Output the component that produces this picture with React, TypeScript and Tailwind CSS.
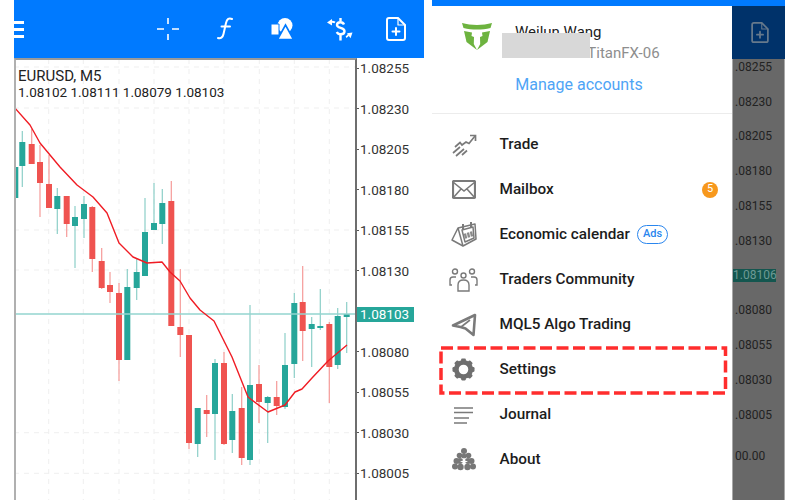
const T = "#26a69a";
const R = "#ef5350";
type C = [number, 0 | 1, number, number, number, number];
const candles: C[] = [
  [15.3, 0, 166, 167, 198, 198],
  [22.3, 0, 131, 142, 166, 187],
  [31.7, 1, 129, 144, 164, 164],
  [40, 1, 145, 162, 183, 217],
  [49, 1, 155, 184, 208, 208],
  [57.3, 0, 188, 196, 209, 234],
  [66.7, 1, 196, 196, 224, 237],
  [75, 0, 206, 217, 226, 268],
  [84, 0, 196, 204, 219, 238],
  [92.3, 1, 206, 207, 259, 272],
  [101.7, 1, 248, 261, 288, 289],
  [110, 1, 272, 285, 292, 303],
  [119, 1, 283, 293, 360, 381],
  [127.3, 0, 269, 287, 360, 360],
  [136.7, 0, 258, 272, 288, 300],
  [145, 0, 198, 232, 276, 276],
  [154, 0, 183, 223, 230, 230],
  [162.3, 0, 189, 203, 224, 244],
  [171.3, 1, 181, 201, 326, 326],
  [180.3, 1, 269, 327, 335, 357],
  [189, 1, 335, 335, 443, 449],
  [197.7, 0, 408, 408, 444, 457],
  [206.7, 1, 395, 410, 414, 437],
  [215, 0, 359, 363, 414, 460],
  [224, 1, 352, 363, 444, 445],
  [232.3, 0, 394, 411, 440, 453],
  [241.7, 1, 387, 408, 458, 465],
  [250, 0, 305, 385, 460, 465],
  [259, 1, 365, 384, 402, 423],
  [267.7, 0, 396, 397, 403, 443],
  [276.7, 1, 381, 397, 406, 415],
  [285, 0, 333, 365, 407, 409],
  [294.3, 0, 293, 303, 364, 378],
  [302.7, 1, 266, 302, 331, 361],
  [311.7, 0, 317, 324, 329, 367],
  [320.3, 0, 289, 326, 328, 330],
  [329.3, 1, 322, 324, 367, 403],
  [337.7, 0, 308, 316, 365, 369],
  [346.7, 0, 302, 314, 317, 353],
];
const ma =
  "14,107 30,125 40,143 60,167 77,185 93,197 107,213 119,243 133,257 147,263 162,262 170,272 180,281 190,298 200,310 214,321 232,357 248,397 268,412 285,405 295,392 302,389 312,378 328,361 347,345";
const leftPrices = ["1.08255", "1.08230", "1.08205", "1.08180", "1.08155", "1.08130", "1.08105", "1.08080", "1.08055", "1.08030", "1.08005"];
const rightPrices = [".08255", ".08230", ".08205", ".08180", ".08155", ".08130", "", ".08080", ".08055", ".08030", ".08005"];

function Chart() {
  return (
    <svg width={343} height={441} viewBox="14 59 343 441" className="block">
      {[48.7, 83.3, 119, 154, 189, 224, 259.3, 294.3, 329.3].map((x) => (
        <line key={x} x1={x} x2={x} y1={59} y2={500} stroke="#efefef" strokeDasharray="5 5" />
      ))}
      {[67, 108, 230, 270, 432.7, 473.3].map((y) => (
        <line key={y} x1={14} x2={357} y1={y} y2={y} stroke="#efefef" strokeDasharray="5 5" />
      ))}
      {candles.map(([x, c, wt, bt, bb, wb]) => (
        <g key={x}>
          <line x1={x} x2={x} y1={wt} y2={wb} stroke={c ? "#f59a98" : "#8ccfc8"} strokeWidth={1.2} />
          <rect x={x - 3} y={bt} width={6} height={bb - bt} fill={c ? R : T} />
        </g>
      ))}
      <line x1={14} x2={357} y1={314} y2={314} stroke="#93d5cf" strokeWidth={1.3} />
      <polyline points={ma} fill="none" stroke="#f01c24" strokeWidth={1.4} strokeLinejoin="round" />
    </svg>
  );
}

function FilePlus({ color, w, h }: { color: string; w: number; h: number }) {
  return (
    <svg width={w} height={h} viewBox="0 0 20 24" fill="none" stroke={color} strokeWidth={2} strokeLinejoin="round" strokeLinecap="round">
      <path d="M3 1h9l7 7v13a2 2 0 0 1-2 2H3a2 2 0 0 1-2-2V3a2 2 0 0 1 2-2z" />
      <path d="M12 1v7h7" strokeWidth={1.2} />
      <path d="M10 11v7M6.5 14.5h7" />
    </svg>
  );
}

function Toolbar() {
  return (
    <div className="relative h-[58px] bg-[#007aff] flex items-center">
      <div className="w-[10px] flex flex-col gap-[4px]">
        <div className="h-[3px] bg-white" />
        <div className="h-[3px] bg-white" />
        <div className="h-[3px] bg-white" />
      </div>
      <div className="ml-auto mr-[18px] flex items-center gap-[33px]">
        <svg width={24} height={24} viewBox="0 0 24 24" stroke="#fff" strokeWidth={1.6}>
          <path d="M12 1v6M12 17v6M1 12h7M16 12h7" />
        </svg>
        <svg width={24} height={26} viewBox="0 0 24 26" fill="none" stroke="#fff" strokeWidth={2} strokeLinecap="round">
          <path d="M19 3c-3-1.5-5 0-6 4l-2.5 11c-.7 3.5-3 5-5.500 4" />
          <path d="M8.500 10.500h8.500" />
        </svg>
        <svg width={24} height={22} viewBox="0 0 24 22" fill="#fff">
          <circle cx={15} cy={7.5} r={7.5} />
          <path d="M1 6h8v11H1z" stroke="#007aff" strokeWidth={1} />
          <path d="M15.500 7 23.500 21.500H7.500z" stroke="#007aff" strokeWidth={1.6} />
        </svg>
        <svg width={26} height={24} viewBox="0 0 26 24" fill="none" stroke="#fff" strokeWidth={2.4}>
          <path d="M17 7.500c-.6-1.600-1.900-2.300-3.500-2.300-2 0-3.500 1-3.500 2.800 0 3.700 7.500 2.200 7.500 6.200 0 2-1.700 3-3.800 3-1.800 0-3.200-.8-3.900-2.300" />
          <path d="M13.500 1v3M13.500 18v5.500" />
          <path d="M8 5.500C6.500 4.500 5 4.500 3 5" strokeWidth={2} />
          <path d="M0 5.500 5 2v6.500zM25.500 15.500l-5.500.8 3.500 5z" fill="#fff" stroke="none" />
          <path d="M19 20c1.200-.5 2-1.200 2.500-2.500" strokeWidth={2} />
        </svg>
        <FilePlus color="#fff" w={20} h={24} />
      </div>
    </div>
  );
}

function Left() {
  return (
    <div className="w-[410px] shrink-0 h-[500px] flex flex-col bg-white overflow-hidden">
      <Toolbar />
      <div className="flex flex-1 min-h-0 relative">
        <div className="relative w-[343px] shrink-0 h-[442px] border-t-2 border-t-[#9a9a9a] border-l-2 border-l-[#b0b0b0] border-r-2 border-r-[#6e6e6e] overflow-hidden">
          <div className="-ml-[2px] -mt-[1px]">
            <Chart />
          </div>
          <div className="absolute left-[2px] top-[8px] text-[#222] leading-[16px]">
            <div className="text-[15px]">EURUSD, M5</div>
            <div className="text-[13.5px]">1.08102 1.08111 1.08079 1.08103</div>
          </div>
        </div>
        <div className="flex flex-col -mt-[10px] text-[13.5px] text-[#333]">
          {leftPrices.map((p) => (
            <div key={p} className="h-[40.5px] flex items-center">
              <span className="w-[2px] h-px bg-[#555] mr-[1px]" />
              {p}
            </div>
          ))}
        </div>
        <div className="absolute left-[343px] top-[249px] w-[57px] h-[15px] bg-[#26a69a] text-white text-[13.5px] leading-[15px] pl-[3px]">
          1.08103
        </div>
      </div>
    </div>
  );
}

const iconProps = { fill: "none", stroke: "#7a7a7a", strokeWidth: 2 };

const rows: { label: string; icon: React.ReactNode; extra?: React.ReactNode }[] = [
  {
    label: "Trade",
    icon: (
      <svg width={26} height={24} viewBox="0 0 26 24" {...iconProps} strokeWidth={1.7}>
        <path d="M4 14 9 9.500l2 2.500 4-3 3 1.500L24 3" />
        <path d="M19 2.500h5.500V8" />
        <path d="M2 20l7-6M5 23l8-7M11 22l5-4.500" />
      </svg>
    ),
  },
  {
    label: "Mailbox",
    icon: (
      <svg width={24} height={20} viewBox="0 0 24 20" {...iconProps} strokeWidth={2.2}>
        <rect x={1} y={1} width={22} height={17} rx={1} />
        <path d="M1 2l11 9 11-9M1 18l8-9M23 18l-8-9" strokeWidth={1.6} />
      </svg>
    ),
  },
  {
    label: "Economic calendar",
    icon: (
      <svg width={26} height={28} viewBox="0 0 26 28" {...iconProps} strokeWidth={1.5} strokeLinejoin="round">
        <path d="M1 19 7 7l17-4 1 15-13 7z" />
        <path d="M7 7l5 18" />
        <path d="M11 9l11-3 1 11-9 4z" />
        <path d="M14 12.500l1 5M17 11.500l1 5M20 10.500l1 5" strokeWidth={2.4} stroke="#8a8a8a" />
        <path d="M12 3v5M20 1v5" strokeWidth={2} />
      </svg>
    ),
    extra: (
      <span className="ml-[7px] h-[19px] w-[31px] rounded-full border border-[#2a86ee] text-[#2a86ee] text-[11px] font-medium flex items-center justify-center">
        Ads
      </span>
    ),
  },
  {
    label: "Traders Community",
    icon: (
      <svg width={29} height={24} viewBox="0 0 29 24" {...iconProps} strokeWidth={1.4}>
        <circle cx={6} cy={3.5} r={2.5} />
        <circle cx={14.5} cy={7.5} r={2.5} />
        <circle cx={23} cy={3.5} r={2.5} />
        <path d="M3 17H1v-5c0-2 1-3 3-3h3M26 17h2v-5c0-2-1-3-3-3h-3" />
        <path d="M9 23v-6c0-3 2-5 5.500-5s5.500 2 5.500 5v6z" />
      </svg>
    ),
  },
  {
    label: "MQL5 Algo Trading",
    icon: (
      <svg width={26} height={24} viewBox="0 0 26 24" {...iconProps} strokeWidth={2.6} strokeLinejoin="round">
        <path d="M2 12.500 24 2l-1.500 20-8-6.500-5 -1.500z" />
        <path d="M19 7l-9 7" strokeWidth={1.6} />
      </svg>
    ),
  },
  {
    label: "Settings",
    icon: (
      <svg width={23} height={23} viewBox="0 0 24 24">
        <circle cx={12} cy={12} r={7.5} fill="none" stroke="#6f6f6f" strokeWidth={5} />
        {[0, 45, 90, 135, 180, 225, 270, 315].map((a) => (
          <rect key={a} x={9.5} y={0.5} width={5} height={5} rx={1.2} fill="#6f6f6f" transform={`rotate(${a} 12 12)`} />
        ))}
      </svg>
    ),
  },
  {
    label: "Journal",
    icon: (
      <svg width={20} height={18} viewBox="0 0 20 18" stroke="#7a7a7a" strokeWidth={1.7}>
        <path d="M0 2h19M0 6.500h19M0 12h15M0 17h13" />
      </svg>
    ),
  },
  {
    label: "About",
    icon: (
      <svg width={24} height={23} viewBox="0 0 24 23" fill="#777">
        <circle cx={12} cy={3} r={3} />
        <circle cx={7.5} cy={7.5} r={2.8} />
        <circle cx={16.5} cy={7.5} r={2.8} />
        <circle cx={12} cy={8} r={2.5} />
        <circle cx={4.5} cy={13} r={3} />
        <circle cx={19.5} cy={13} r={3} />
        <circle cx={8} cy={13} r={3} />
        <circle cx={16} cy={13} r={3} />
        <circle cx={3} cy={18.5} r={3} />
        <circle cx={21} cy={18.5} r={3} />
        <circle cx={8.5} cy={19} r={3.2} />
        <circle cx={15.5} cy={19} r={3.2} />
        <path d="M12 9.500l1 3 3 1-3 1-1 3-1-3-3-1 3-1z" fill="#fff" />
      </svg>
    ),
  },
];

function Drawer() {
  return (
    <div className="relative w-[300px] shrink-0 bg-white">
      <div className="h-[108px] border-b border-[#ececec] flex flex-col">
        <div className="flex mt-[17px] relative">
          <svg width={30} height={28} viewBox="0 0 30 28" className="ml-[30px]">
            <path d="M0 0c9 2.500 21 2.500 30 0l-1.500 5C20 7 10 7 1.500 5z" fill="#6db33f" />
            <path d="M2 8l8 1.500-.5 3.500 2.500 1-.2 7L15 27 4.500 19zM28 8l-8 1.500.5 3.500-2.500 1 .2 7L15 27l10.500-8z" fill="#6db33f" />
          </svg>
          <div className="ml-[23px] -mt-[1px] text-[15px] leading-[21px]">
            <div className="text-[#222]">Weilun Wang</div>
            <div className="text-[#8e8e8e] pl-[2px]">0000000 - TitanFX-06</div>
          </div>
          <div className="absolute left-[70px] top-[10px] w-[88px] h-[25px] bg-[#d8d8d8]" />
        </div>
        <div className="mt-[10px] text-center text-[#4ea4f6] text-[16px] leading-[22px] -ml-[6px]">Manage accounts</div>
      </div>
      <div className="pt-[8px]">
        {rows.map((r) => (
          <div key={r.label} className="h-[45px] flex items-center">
            <div className="w-[58px] pl-[5px] flex justify-center shrink-0">{r.icon}</div>
            <span className="ml-[9.5px] text-[15.3px] font-medium text-[#1c1c1c]">{r.label}</span>
            {r.extra}
            {r.label === "Mailbox" && (
              <span className="ml-auto mr-[14px] w-[16px] h-[16px] rounded-full bg-[#f7981d] text-white text-[11px] flex items-center justify-center">
                5
              </span>
            )}
          </div>
        ))}
      </div>
      <svg width={289} height={49} viewBox="0 0 289 49" className="absolute left-[7px] top-[340px]" fill="none">
        <rect x={2} y={2} width={284.5} height={45} stroke="#ff2d2d" strokeWidth={3.5} strokeDasharray="12 4.5" />
      </svg>
    </div>
  );
}

function Dim() {
  return (
    <div className="w-[53px] shrink-0 bg-[#686868] border-x border-[#a8a8a8] flex flex-col text-[12px] text-[#222]">
      <div className="h-[53px] bg-[#00326a] flex items-center justify-center pl-[2px] -mx-px">
        <FilePlus color="#66798c" w={18} h={21} />
      </div>
      <div className="flex flex-col -mt-[9.5px] pl-[2px]">
        {rightPrices.map((p, i) =>
          p ? (
            <div key={p} className="h-[34.8px] flex items-center">{p}</div>
          ) : (
            <div key={i} className="h-[34.8px] flex items-center">
              <span className="bg-[#14564f] text-[#6d9a95] -ml-[2px] w-[43px] h-[13px] leading-[13px]">1.08106</span>
            </div>
          ),
        )}
        <div className="mt-[6px] h-[34.8px] flex items-center">00.00</div>
      </div>
    </div>
  );
}

export default function App() {
  return (
    <div className="w-[800px] h-[500px] flex bg-white overflow-hidden" style={{ fontFamily: "Roboto, sans-serif" }}>
      <div className="w-[14px] shrink-0" />
      <Left />
      <div className="w-[8px] shrink-0" />
      <div className="w-[353px] shrink-0 flex flex-col">
        <div className="h-[6px] bg-[#007aff]" />
        <div className="flex flex-1 min-h-0">
          <Drawer />
          <Dim />
        </div>
      </div>
    </div>
  );
}
